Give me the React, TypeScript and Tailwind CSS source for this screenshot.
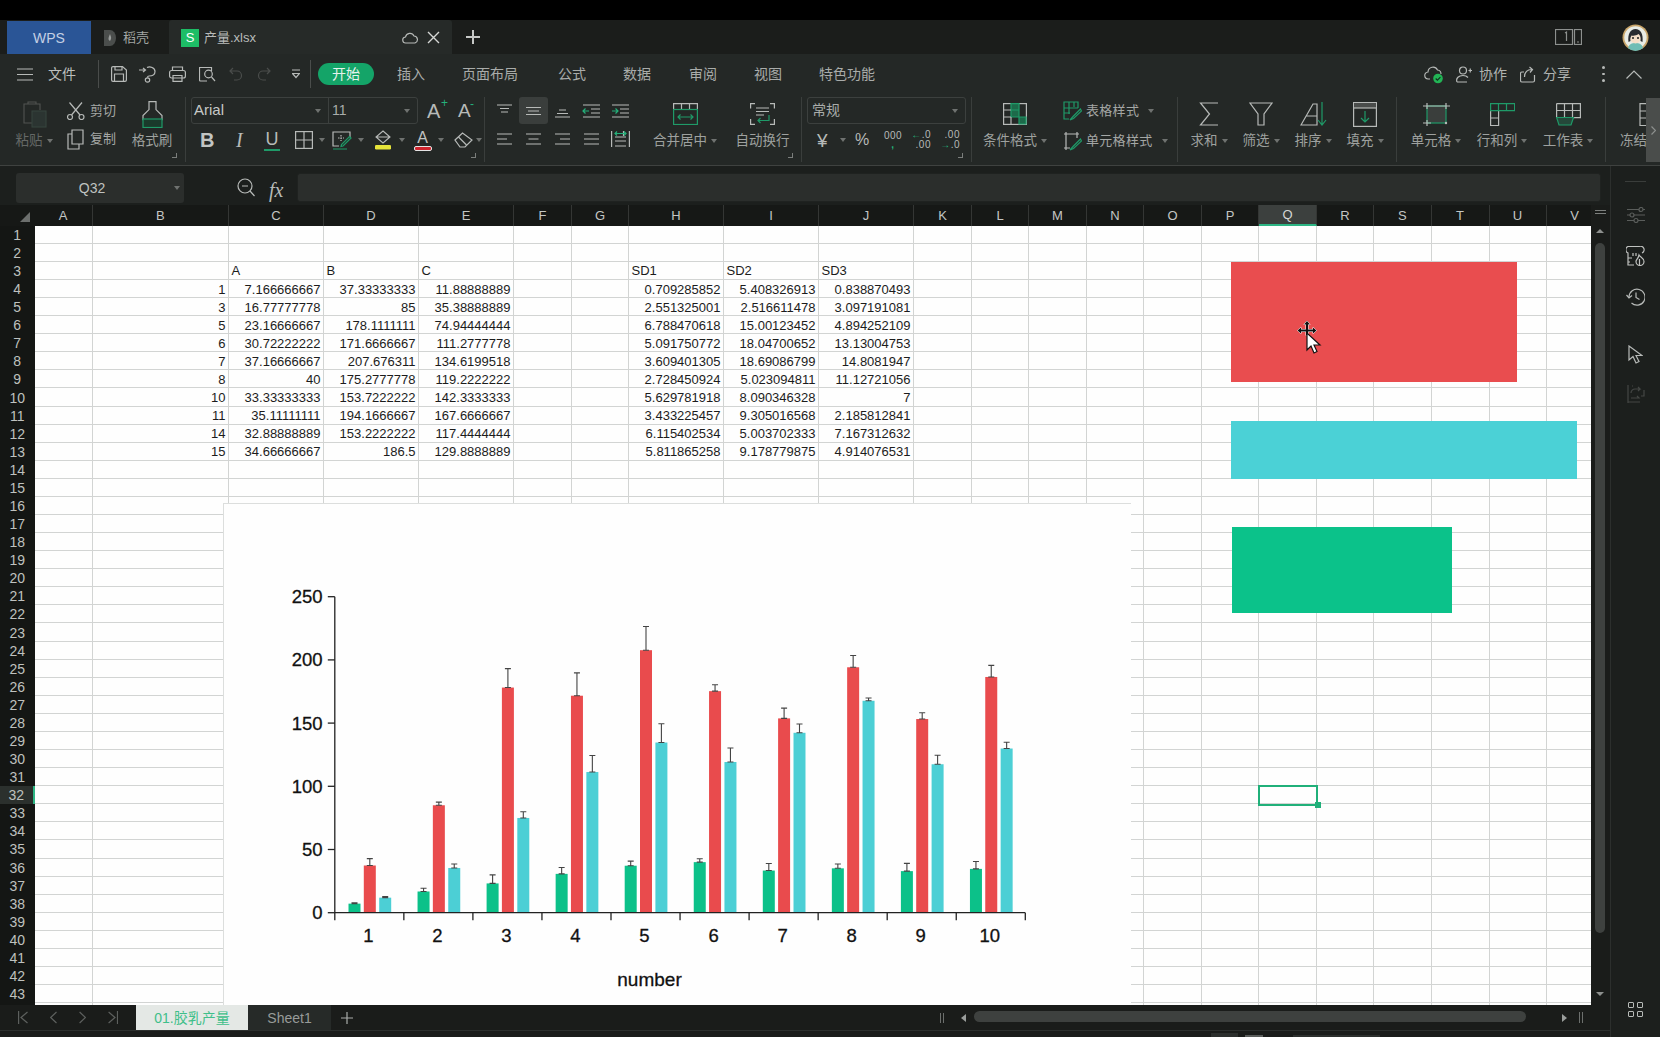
import type { ReactNode } from "react";

const LINE = "#b7bab8";

function Ic({ w, h, children, stroke = LINE }: { w: number; h: number; children: ReactNode; stroke?: string }) {
  return (
    <svg width={w} height={h} viewBox={`0 0 ${w} ${h}`} fill="none" stroke={stroke} strokeWidth="1.2" className="block shrink-0">
      {children}
    </svg>
  );
}

function Caret() {
  return <span className="block w-0 h-0 shrink-0 border-x-[3.5px] border-x-transparent border-t-[4px] border-t-[#6f7270]" />;
}

function Corner() {
  return <span className="absolute right-[8px] bottom-[4px] w-[5px] h-[5px] border-r border-b border-[#7b7e7c]" />;
}

function Big({ className, label, caret, dim, icon }: { className: string; label: string; caret?: boolean; dim?: boolean; icon: ReactNode }) {
  return (
    <div className={`flex flex-col items-center shrink-0 ${className}`}>
      <div className="h-[34px] flex items-center justify-center">{icon}</div>
      <div className={`h-[20px] flex items-center gap-[4px] text-[13.5px] whitespace-nowrap ${dim ? "text-[#656866]" : "text-[#9ea19f]"}`}>
        {label}
        {caret && <Caret />}
      </div>
    </div>
  );
}

function TitleBar() {
  return (
    <div className="h-[34px] shrink-0 flex bg-[#1b1d1b]">
      <div className="ml-[7px] mt-px pt-px w-[84px] flex items-center justify-center bg-[#2a5596] text-[14px] text-[#c3d0e4]">WPS</div>
      <div className="w-[78px] flex items-center pl-[11px] pt-px gap-[7px] text-[13px] text-[#a2a5a3]">
        <svg width="14" height="18" viewBox="0 0 14 18" className="block">
          <path d="M2 1h6a6 8 0 0 1 0 16H2z" fill="#4b4e4c" />
          <path d="M8 5c1 3 2 4 0 7-2-1-2-3 0-7z" fill="#9a9d9b" />
        </svg>
        稻壳
      </div>
      <div className="w-[283px] flex items-center bg-[#262a28] rounded-t-[3px] pt-px">
        <span className="ml-[12px] w-[18px] h-[18px] flex items-center justify-center bg-[#1dbd66] text-[13px] text-white">S</span>
        <span className="ml-[5px] text-[13px] text-[#b9bcba]">产量.xlsx</span>
        <span className="ml-auto">
          <Ic w={17} h={12}>
            <path d="M4 11a3 3 0 0 1-.5-6 4.5 4.5 0 0 1 8.5-1 3.6 3.6 0 0 1 1 7z" />
          </Ic>
        </span>
        <span className="ml-[8px] mr-[12px]">
          <Ic w={13} h={13} stroke="#d5d7d5">
            <path d="M1 1l11 11M12 1L1 12" strokeWidth="1.4" />
          </Ic>
        </span>
      </div>
      <div className="ml-[14px] self-center">
        <Ic w={14} h={14} stroke="#c6c8c6">
          <path d="M7 0v14M0 7h14" strokeWidth="2" />
        </Ic>
      </div>
      <div className="ml-auto self-center">
        <Ic w={27} h={16} stroke="#8d908e">
          <rect x="0.5" y="0.5" width="17" height="15" />
          <rect x="19.5" y="0.5" width="7" height="15" />
          <path d="M10 4l1.5-1v9M22 13h2" />
        </Ic>
      </div>
      <div className="ml-[40px] mr-[11px] self-center">
        <svg width="27" height="27" viewBox="0 0 27 27" className="block">
          <circle cx="13.5" cy="13.5" r="13" fill="#c9a66b" />
          <circle cx="13.5" cy="13.5" r="11.2" fill="#e8ece6" />
          <path d="M6 24c1-4 4-5 7.5-5s6.5 1 7.5 5a11 11 0 0 1-15 0z" fill="#6fbdb5" />
          <ellipse cx="13.5" cy="13.5" rx="5.5" ry="6" fill="#f5dfc8" />
          <path d="M6.5 18c-1-8 2-13 7-13s8 5 7 13l-2-1c.5-4-.5-6-2-7-2 1.5-5 2-7 1.5-1 1.5-1.5 3-1 5.5z" fill="#2a2c30" />
          <circle cx="11" cy="14" r="1" fill="#222" />
          <circle cx="16" cy="14" r="1" fill="#222" />
        </svg>
      </div>
    </div>
  );
}

function MenuBar() {
  const tabs = [
    ["插入", "ml-[23px]"],
    ["页面布局", "ml-[37px]"],
    ["公式", "ml-[40px]"],
    ["数据", "ml-[37px]"],
    ["审阅", "ml-[38px]"],
    ["视图", "ml-[37px]"],
    ["特色功能", "ml-[37px]"],
  ];
  return (
    <div className="h-[40px] shrink-0 flex items-center text-[14px] text-[#a9acaa]">
      <div className="ml-[17px]">
        <Ic w={16} h={13}>
          <path d="M0 1h16M0 6.5h16M0 12h16" />
        </Ic>
      </div>
      <span className="ml-[15px] text-[#bcbfbd]">文件</span>
      <span className="ml-[22px] w-px h-[28px] bg-[#4a4d4b]" />
      <div className="ml-[12px]">
        <Ic w={16} h={16}>
          <path d="M2 .6h9.5L15.4 4v10a1.4 1.4 0 0 1-1.4 1.4H2A1.4 1.4 0 0 1 .6 14V2A1.4 1.4 0 0 1 2 .6z" />
          <path d="M3.5 15V8h9v7M4 1v3h7V1" />
        </Ic>
      </div>
      <div className="ml-[12px]">
        <Ic w={17} h={17}>
          <path d="M0 4h6M4 2l2.5 2L4 6" />
          <path d="M8 1.5c3-1.5 8 0 8 4 0 3.500-3 4.500-6 4.500-1 0-1.500.5-1.500 1.500" />
          <circle cx="8.5" cy="14" r="2.2" />
        </Ic>
      </div>
      <div className="ml-[13px]">
        <Ic w={17} h={16}>
          <rect x="0.6" y="4.5" width="15.8" height="7.5" rx="2" />
          <path d="M3.5 4.5V1h10v3.5M4 9.5h9v5.9H4z" />
        </Ic>
      </div>
      <div className="ml-[13px]">
        <Ic w={17} h={16}>
          <path d="M8 15H1.5a1 1 0 0 1-1-1V1.5h12V5" />
          <circle cx="9.5" cy="8" r="3.8" />
          <path d="M12.5 11l3.5 4" />
        </Ic>
      </div>
      <div className="ml-[13px]">
        <Ic w={14} h={14} stroke="#4a4d4b">
          <path d="M4 1L1 4l3 3M1 4h7a4.5 4.5 0 0 1 0 9H5" />
        </Ic>
      </div>
      <div className="ml-[14px]">
        <Ic w={14} h={14} stroke="#4a4d4b">
          <path d="M10 1l3 3-3 3M13 4H6a4.5 4.5 0 0 0 0 9h3" />
        </Ic>
      </div>
      <div className="ml-[21px]">
        <Ic w={8} h={10}>
          <path d="M0 1h8M.5 4.5L4 8.5l3.5-4H.5z" />
        </Ic>
      </div>
      <span className="ml-[10px] w-px h-[28px] bg-[#4a4d4b]" />
      <span className="ml-[7px] w-[56px] h-[22px] rounded-full bg-[#14a468] flex items-center justify-center text-[#e6f2ec]">开始</span>
      {tabs.map(([t, m]) => (
        <span key={t} className={m}>
          {t}
        </span>
      ))}
      <div className="ml-auto">
        <svg width="20" height="19" viewBox="0 0 20 19" fill="none" stroke={LINE} strokeWidth="1.1" className="block">
          <path d="M6 14H4.5a3.5 3.5 0 0 1-.5-7 5 5 0 0 1 9.500-2 4 4 0 0 1 3.500 4" />
          <circle cx="14" cy="13.5" r="4.8" fill="#22b455" stroke="none" />
          <path d="M11.7 13.5l1.7 1.7 3-3" stroke="#10301f" />
        </svg>
      </div>
      <div className="ml-[12px]">
        <Ic w={16} h={17}>
          <circle cx="7" cy="4.5" r="3.5" />
          <path d="M1 16c-1.5-4 2-6.5 6-6.5 2.500 0 4 .8 5 2M1 16h10M12.5 4.5h3.5M14.25 2.5v4" />
        </Ic>
      </div>
      <span className="ml-[7px] text-[#b0b3b1]">协作</span>
      <div className="ml-[13px]">
        <Ic w={16} h={17}>
          <path d="M4 6H2a1.5 1.5 0 0 0-1.5 1.5v7A1.5 1.5 0 0 0 2 16h11a1.5 1.5 0 0 0 1.500-1.500V9" />
          <path d="M4.5 11c0-5 3-7.5 7-7.5M9.5 1l3 2.500-2.500 3" />
        </Ic>
      </div>
      <span className="ml-[7px] text-[#b0b3b1]">分享</span>
      <span className="ml-[31px] w-[3px] flex flex-col items-center gap-[4px]">
        <i className="block w-[2.5px] h-[2.5px] rounded-full bg-[#b7bab8]" />
        <i className="block w-[2.5px] h-[2.5px] rounded-full bg-[#b7bab8]" />
        <i className="block w-[2.5px] h-[2.5px] rounded-full bg-[#b7bab8]" />
      </span>
      <div className="ml-[21px] mr-[18px]">
        <Ic w={16} h={9}>
          <path d="M.5 8.5L8 1l7.5 7.5" />
        </Ic>
      </div>
    </div>
  );
}

function AlignIcon({ rows }: { rows: string }) {
  return (
    <Ic w={17} h={14}>
      <path d={rows} />
    </Ic>
  );
}

function FontGroup() {
  return (
    <div className="relative w-[299px] h-[65px] mt-[3px] shrink-0 border-r border-[#3a3e3c] pl-[5px]">
      <div className="flex items-center h-[27px]">
        <div className="flex w-[227px] h-[27px] border border-[#3c403e] rounded-[3px] text-[#c6c9c7]">
          <div className="w-[137px] flex items-center justify-between pl-[2px] pr-[7px] border-r border-[#3c403e] text-[15px]">
            Arial
            <Caret />
          </div>
          <div className="flex-1 flex items-center justify-between pl-[3px] pr-[7px] text-[14px] text-[#a9acaa]">
            11
            <Caret />
          </div>
        </div>
        <span className="ml-[9px] relative w-[21px] text-[20px] font-light leading-none text-[#b7bab8]">
          A<span className="absolute left-[14px] top-[-4px] text-[12px] text-[#25b07a]">+</span>
        </span>
        <span className="ml-[10px] relative w-[15px] text-[19px] font-light leading-none text-[#b7bab8]">
          A<span className="absolute left-[12px] top-[-3px] text-[12px] text-[#25b07a]">-</span>
        </span>
      </div>
      <div className="flex items-center h-[22px] mt-[5px]">
        <span className="ml-[9px] w-[14px] text-[20px] font-bold text-[#c2c5c3]">B</span>
        <span className="ml-[22px] w-[10px] text-[20px] italic [font-family:'Liberation_Serif',serif] text-[#b7bab8]">I</span>
        <span className="ml-[18px] w-[16px] h-[21px] flex justify-center text-[18px] leading-[19px] text-[#b7bab8] border-b-2 border-[#1f9a68]">U</span>
        <div className="ml-[15px]">
          <Ic w={18} h={18}>
            <rect x="0.6" y="0.6" width="16.8" height="16.8" />
            <path d="M9 1v16M1 9h16" />
          </Ic>
        </div>
        <span className="ml-[6px]">
          <Caret />
        </span>
        <div className="ml-[7px]">
          <Ic w={20} h={19}>
            <path d="M18 6V1H1v14h6" />
            <path d="M9 4v6M6 7h6" strokeDasharray="1.5 1" />
            <path d="M19 7L11 15l-2 .5.5-2 8-8zM1 18h14" stroke="#1f9a68" />
          </Ic>
        </div>
        <span className="ml-[6px]">
          <Caret />
        </span>
        <div className="ml-[10px]">
          <svg width="19" height="20" viewBox="0 0 19 20" fill="none" stroke={LINE} strokeWidth="1.1" className="block">
            <path d="M9 1l7 6-7 6-7-6zM2 7h14" />
            <rect x="1" y="15" width="16" height="4.5" rx="1.2" fill="#e6e43a" stroke="none" />
          </svg>
        </div>
        <span className="ml-[6px]">
          <Caret />
        </span>
        <div className="ml-[8px] flex flex-col items-center w-[19px]">
          <span className="text-[16px] leading-[15px] font-light text-[#c0c3c1]">A</span>
          <span className="w-[18px] h-[5px] mt-[1px] rounded-[2px] bg-[#d0242d] border border-[#e4e4e4]" />
        </div>
        <span className="ml-[6px]">
          <Caret />
        </span>
        <div className="ml-[10px]">
          <Ic w={19} h={16}>
            <path d="M1 8l7.5-7L18 8l-7 7H6z" />
            <path d="M4.5 5l8 8" />
          </Ic>
        </div>
        <span className="ml-[3px]">
          <Caret />
        </span>
      </div>
      <Corner />
    </div>
  );
}

function AlignGroup() {
  const top = ["M1 1h15M4 4.5h9M5 8h7", "M1 3.5h15M3 7h11M1 10.5h15", "M5 6h7M3 9.5h11M1 13h15"];
  const row2 = ["M1 2h15M1 7h10M1 12h15", "M1 2h15M3.5 7h10M1 12h15", "M1 2h15M6 7h10M1 12h15", "M1 2h15M1 7h15M1 12h15"];
  return (
    <div className="relative w-[317px] h-[65px] mt-[3px] shrink-0 flex border-r border-[#3a3e3c] pl-[5px]">
      <div className="grid grid-cols-[repeat(5,29px)] grid-rows-[27px_26px] gap-y-[2px] h-[55px]">
        {top.map((d, i) => (
          <div key={d} className={`flex items-center justify-center rounded-[3px] ${i === 1 ? "bg-[#3a3e3c]" : ""}`}>
            <AlignIcon rows={d} />
          </div>
        ))}
        <div className="flex items-center justify-center">
          <Ic w={19} h={14}>
            <path d="M1 1h17M9 5h9M9 9h9M1 13h17" />
            <path d="M7 7H1M3.5 4.5L1 7l2.5 2.500" stroke="#25b07a" />
          </Ic>
        </div>
        <div className="flex items-center justify-center">
          <Ic w={19} h={14}>
            <path d="M1 1h17M9 5h9M9 9h9M1 13h17" />
            <path d="M1 7h6M4.5 4.5L7 7 4.5 9.5" stroke="#25b07a" />
          </Ic>
        </div>
        {row2.map((d) => (
          <div key={d} className="flex items-center justify-center">
            <AlignIcon rows={d} />
          </div>
        ))}
        <div className="flex items-center justify-center">
          <Ic w={19} h={18}>
            <path d="M.6 1v16M18.4 1v16M4 7h11M4 11h11M4 16h11M12.5 1V6" />
            <path d="M4 3.5h11M6 1.5L4 3.5l2 2M13 1.5l2 2-2 2" stroke="#25b07a" />
          </Ic>
        </div>
      </div>
      <Big
        className="ml-[10px] w-[80px]"
        label="合并居中"
        caret
        icon={
          <Ic w={25} h={22}>
            <path d="M.6 6.5V.6h23.8v5.9M8.5 1v5.5M16.5 1v5.5" />
            <rect x="0.6" y="6.5" width="23.8" height="15" stroke="#1f9a68" />
            <path d="M5 14h15M7.5 11.5L5 14l2.5 2.5M17.500 11.5L20 14l-2.500 2.500" stroke="#1f9a68" />
          </Ic>
        }
      />
      <Big
        className="w-[75px]"
        label="自动换行"
        icon={
          <Ic w={25} h={22}>
            <path d="M5 .6H.6v5M20 .6h4.4v5M.6 16v5.4H5M24.4 16v5.4H20M6 5h13M6 8.5h13M6 12h8" />
            <path d="M19 12v5.500H8M10.500 15L8 17.500l2.500 2.500" stroke="#1f9a68" />
          </Ic>
        }
      />
      <Corner />
    </div>
  );
}

function NumberGroup() {
  return (
    <div className="relative w-[170px] h-[65px] mt-[3px] shrink-0 border-r border-[#3a3e3c] pl-[5px]">
      <div className="w-[159px] h-[27px] border border-[#3c403e] rounded-[3px] flex items-center justify-between pl-[4px] pr-[7px] text-[14px] text-[#a9acaa]">
        常规
        <Caret />
      </div>
      <div className="flex items-center h-[28px] mt-[2px] text-[#b7bab8]">
        <span className="ml-[10px] w-[16px] text-[19px] leading-none">¥</span>
        <span className="ml-[7px]">
          <Caret />
        </span>
        <span className="ml-[9px] w-[16px] text-[16px] leading-none">%</span>
        <span className="ml-[12px] w-[20px] flex flex-col items-center text-[10px] leading-[9px] tracking-[0.5px]">
          000
          <span className="text-[#25b07a] font-bold">,</span>
        </span>
        <span className="ml-[8px] w-[20px] flex flex-col items-end text-[10px] leading-[10px] tracking-[0.5px]">
          <span>
            <span className="text-[#25b07a]">←</span>.0
          </span>
          .00
        </span>
        <span className="ml-[9px] w-[20px] flex flex-col items-end text-[10px] leading-[10px] tracking-[0.5px]">
          .00
          <span>
            <span className="text-[#25b07a]">→</span>.0
          </span>
        </span>
      </div>
      <Corner />
    </div>
  );
}

function StylesGroup() {
  return (
    <div className="w-[206px] h-[65px] mt-[3px] shrink-0 flex border-r border-[#3a3e3c] pl-[3px]">
      <Big
        className="w-[80px]"
        label="条件格式"
        caret
        icon={
          <svg width="24" height="22" viewBox="0 0 24 22" fill="none" stroke={LINE} strokeWidth="1.2" className="block">
            <rect x="0.6" y="0.6" width="22.8" height="20.8" />
            <path d="M8 7h8v7h7v7h-7V14H8zM8 .6h8V7H8z" fill="#1d6a4a" stroke="#1f9a68" />
            <path d="M1 7h7M1 14h7M8 14v7" />
          </svg>
        }
      />
      <div className="ml-[8px] flex flex-col">
        <div className="h-[27px] flex items-center text-[13px] tracking-[0.3px] text-[#a4a7a5]">
          <span className="w-[23px]">
            <Ic w={19} h={20} stroke="#1f9a68">
              <path d="M6 18H1V1h14v6M1 7h14M1 12h6M6 1v12M11 1v5" />
              <path d="M17.5 8L10 15.5 7 19l3.5-1.5L18.5 10z" />
            </Ic>
          </span>
          表格样式
          <span className="ml-[9px]">
            <Caret />
          </span>
        </div>
        <div className="h-[27px] mt-[3px] flex items-center text-[13px] tracking-[0.3px] text-[#a4a7a5]">
          <span className="w-[23px]">
            <Ic w={19} h={20}>
              <path d="M1 3h15M3 1v18M1 17h6M14 1v6" />
              <path d="M17.5 8L10 15.5 7 19l3.5-1.5L18.5 10z" stroke="#1f9a68" />
            </Ic>
          </span>
          单元格样式
          <span className="ml-[9px]">
            <Caret />
          </span>
        </div>
      </div>
    </div>
  );
}

function ToolsGroup() {
  return (
    <div className="w-[219px] h-[65px] mt-[3px] shrink-0 flex border-r border-[#3a3e3c] pl-[5px]">
      <Big
        className="w-[52px]"
        label="求和"
        caret
        icon={
          <Ic w={20} h={24}>
            <path d="M19 1H1.5l9 11-9 11H19" />
          </Ic>
        }
      />
      <Big
        className="w-[52px]"
        label="筛选"
        caret
        icon={
          <Ic w={24} h={24}>
            <path d="M1 1h22l-8 11v11H9V12z" />
          </Ic>
        }
      />
      <Big
        className="w-[52px]"
        label="排序"
        caret
        icon={
          <Ic w={27} h={25}>
            <path d="M1 23L13 2h4v21zM6 14h11M1 23h16" />
            <path d="M22 0v23M18 18l4 5 4-5" stroke="#1f9a68" />
          </Ic>
        }
      />
      <Big
        className="w-[52px]"
        label="填充"
        caret
        icon={
          <Ic w={24} h={25}>
            <rect x="0.6" y="0.6" width="22.8" height="23.8" />
            <rect x="1" y="1" width="22" height="5" fill="#4a4d4b" stroke="none" />
            <path d="M1 6h22" />
            <path d="M12 9v11M8 16l4 4 4-4" stroke="#1f9a68" />
          </Ic>
        }
      />
    </div>
  );
}

function SheetToolsGroup() {
  return (
    <div className="w-[209px] h-[65px] mt-[3px] shrink-0 flex border-r border-[#3a3e3c] pl-[6px]">
      <Big
        className="w-[66px]"
        label="单元格"
        caret
        icon={
          <svg width="27" height="23" viewBox="0 0 27 23" fill="none" className="block" stroke={LINE} strokeWidth="1.2">
            <rect x="4" y="3" width="19" height="17" fill="#3a3e3c" stroke="#1f9a68" />
            <path d="M0 3h27M4 0v6M0 20h8M4 17v6M23 0v6" />
            <circle cx="23" cy="20" r="1.2" fill={LINE} stroke="none" />
          </svg>
        }
      />
      <Big
        className="w-[66px]"
        label="行和列"
        caret
        icon={
          <Ic w={25} h={23}>
            <path d="M.6 7.5h8v15h-8zM.6 15h8" />
            <path d="M.6.6h24v7H.6zM8.5 1v6.5M16.5 1v6.5" stroke="#1f9a68" />
          </Ic>
        }
      />
      <Big
        className="w-[66px]"
        label="工作表"
        caret
        icon={
          <Ic w={25} h={23}>
            <path d="M.6.6h23.8v14H17M.6.6v14M.6 7.5h23.8M8.5 1v14M16.5 1v14" />
            <path d="M.6 14.5h16.9L15 22H3z" stroke="#1f9a68" fill="#25483a" />
          </Ic>
        }
      />
    </div>
  );
}

function Ribbon() {
  return (
    <div className="relative h-[72px] shrink-0 flex border-b border-[#3f4240]">
      <div className="relative w-[186px] h-[65px] mt-[3px] shrink-0 flex border-r border-[#3a3e3c] pl-[12px]">
        <Big
          className="w-[44px]"
          label="粘贴"
          caret
          dim
          icon={
            <span className="ml-[2px]">
              <svg width="24" height="27" viewBox="0 0 24 27" fill="none" stroke="#505351" strokeWidth="1.1" className="block">
                <path d="M11 22H1V3h16v6M5 3V1h8v2" />
                <rect x="9" y="10" width="14" height="16" fill="#2b3431" stroke="#36443d" />
              </svg>
            </span>
          }
        />
        <div className="ml-[11px] w-[65px] flex flex-col text-[13px] text-[#a4a7a5]">
          <div className="h-[28px] flex items-center gap-[5px]">
            <Ic w={18} h={18}>
              <circle cx="3" cy="15" r="2.5" />
              <circle cx="14.5" cy="15" r="2.5" />
              <path d="M4.5 13L15 .5M13 13L2.5.5" />
            </Ic>
            剪切
          </div>
          <div className="h-[26px] mt-[1px] flex items-center gap-[6px]">
            <Ic w={17} h={21}>
              <path d="M5 15V1h11v14zM5 5H1v15h11v-5" />
            </Ic>
            复制
          </div>
        </div>
        <Big
          className="w-[40px]"
          label="格式刷"
          icon={
            <Ic w={21} h={27}>
              <path d="M7 .6h7v8l6 6v4H1v-4l6-6z" />
              <rect x="1" y="18" width="19" height="8.5" stroke="#1f9a68" fill="#1a3a2b" />
            </Ic>
          }
        />
        <Corner />
      </div>
      <FontGroup />
      <AlignGroup />
      <NumberGroup />
      <StylesGroup />
      <ToolsGroup />
      <SheetToolsGroup />
      <div className="w-[54px] h-[65px] mt-[3px] pl-[14px]">
        <Big
          className="w-[27px]"
          label="冻结"
          icon={
            <span className="block w-[27px] pl-[19px] overflow-hidden">
              <Ic w={24} h={23}>
                <path d="M1 .6h22v22H1zM1 8h22M1 15h22M8 1v22" />
              </Ic>
            </span>
          }
        />
      </div>
      <div className="absolute right-0 top-[4px] w-[14px] h-[64px] bg-[#4a4d4b] flex items-center justify-center">
        <Ic w={5} h={9} stroke="#8d908e">
          <path d="M.5.5l4 4-4 4" />
        </Ic>
      </div>
    </div>
  );
}

function FormulaBar() {
  return (
    <div className="h-[39px] shrink-0 flex pt-[7px] pl-[16px]">
      <div className="relative w-[168px] h-[30px] rounded-[3px] bg-[#2b2e2c] flex items-center justify-center pr-[16px] text-[14px] text-[#bfc2c0]">
        Q32
        <span className="absolute right-[4px] top-[13px]">
          <Caret />
        </span>
      </div>
      <div className="ml-[53px] mt-[5px]">
        <Ic w={18} h={19}>
          <circle cx="8" cy="8" r="7" />
          <path d="M5 8h6M13 13l4.5 5" />
        </Ic>
      </div>
      <span className="ml-[14px] mt-[2px] text-[20px] italic [font-family:'Liberation_Serif',serif] text-[#b7bab8]">fx</span>
      <div className="ml-[14px] w-[1304px] h-[29px] rounded-[3px] bg-[#2b2e2c] border border-[#1f2220]" />
    </div>
  );
}

const COLS = ["A", "B", "C", "D", "E", "F", "G", "H", "I", "J", "K", "L", "M", "N", "O", "P", "Q", "R", "S", "T", "U", "V"];

const N = ["1", "3", "5", "6", "7", "8", "10", "11", "14", "15"];
const A = ["7.166666667", "16.77777778", "23.16666667", "30.72222222", "37.16666667", "40", "33.33333333", "35.11111111", "32.88888889", "34.66666667"];
const B = ["37.33333333", "85", "178.1111111", "171.6666667", "207.676311", "175.2777778", "153.7222222", "194.1666667", "153.2222222", "186.5"];
const C = ["11.88888889", "35.38888889", "74.94444444", "111.2777778", "134.6199518", "119.2222222", "142.3333333", "167.6666667", "117.4444444", "129.8888889"];
const S1 = ["0.709285852", "2.551325001", "6.788470618", "5.091750772", "3.609401305", "2.728450924", "5.629781918", "3.433225457", "6.115402534", "5.811865258"];
const S2 = ["5.408326913", "2.516611478", "15.00123452", "18.04700652", "18.69086799", "5.023094811", "8.090346328", "9.305016568", "5.003702333", "9.178779875"];
const S3 = ["0.838870493", "3.097191081", "4.894252109", "13.13004753", "14.8081947", "11.12721056", "7", "2.185812841", "7.167312632", "4.914076531"];

const DATA: Record<string, string[]> = { B: N, C: A, D: B, E: C, H: S1, I: S2, J: S3 };
const HEADS: Record<string, string> = { C: "A", D: "B", E: "C", H: "SD1", I: "SD2", J: "SD3" };

function cellText(col: string, row: number) {
  if (row === 3) return HEADS[col] ?? "";
  if (row >= 4 && row <= 13) return DATA[col]?.[row - 4] ?? "";
  return "";
}

function Chart() {
  const x0 = 334.3;
  const step = 69.05;
  const y0 = 912.7;
  const k = 1.264;
  const series = [
    { fill: "#0cc189", off: 13.7, v: A, s: S1 },
    { fill: "#e94b4d", off: 29, v: B, s: S2 },
    { fill: "#4ccfd5", off: 44.4, v: C, s: S3 },
  ];
  return (
    <svg width="907" height="502" viewBox="223.5 504 907 502" className="block">
      {series.map((d) =>
        d.v.map((val, i) => {
          const v = Number(val);
          const x = x0 + i * step + d.off;
          const top = y0 - v * k;
          const end = y0 - (v + Number(d.s[i])) * k;
          return (
            <g key={d.fill + i}>
              <rect x={x} y={top} width="12" height={v * k} fill={d.fill} />
              <path d={`M${x + 6} ${top}V${end}M${x + 3} ${end}h6M${x + 3} ${top}h6`} stroke="#444" strokeWidth="1.1" fill="none" />
            </g>
          );
        })
      )}
      <path d={`M${x0} 596.7V${y0}H${x0 + step * 10}`} stroke="#222" strokeWidth="1.3" fill="none" />
      {[0, 50, 100, 150, 200, 250].map((t) => (
        <g key={t}>
          <path d={`M${x0 - 7} ${y0 - t * k}H${x0}`} stroke="#222" strokeWidth="1.3" />
          <text x={322} y={y0 - t * k + 6.5} textAnchor="end" fontSize="18.5" fill="#111" stroke="#111" strokeWidth="0.3" fontFamily="'Liberation Sans', sans-serif">
            {t}
          </text>
        </g>
      ))}
      {Array.from({ length: 11 }, (_, i) => (
        <path key={i} d={`M${x0 + i * step} ${y0}v7.5`} stroke="#222" strokeWidth="1.3" />
      ))}
      {Array.from({ length: 10 }, (_, i) => (
        <text key={i} x={x0 + i * step + 33.5} y={941.5} textAnchor="middle" fontSize="18.5" fill="#111" stroke="#111" strokeWidth="0.3" fontFamily="'Liberation Sans', sans-serif">
          {i + 1}
        </text>
      ))}
      <text x={649} y={986} textAnchor="middle" fontSize="19" fill="#111" stroke="#111" strokeWidth="0.3" fontFamily="'Liberation Sans', sans-serif">
        number
      </text>
    </svg>
  );
}

function Sheet() {
  return (
    <div className="relative w-[1590.5px] h-[800px] shrink-0 overflow-hidden bg-[#fefefe]">
      <div className="grid grid-cols-[34.5px_58px_136.5px_95px_95px_95px_58px_57px_95px_95px_95px_58px_57px_58px_57px_58px_57px_58px_57px_57.5px_58px_57px_57px] grid-rows-[21px_17.5px_18px_18.5px_repeat(40,18.08px)_18px]">
        <div className="bg-[#161816] flex items-end justify-end pr-[5px] pb-[4px]">
          <span className="w-0 h-0 border-l-[10px] border-l-transparent border-b-[10px] border-b-[#6c6f6d]" />
        </div>
        {COLS.map((c) => (
          <div
            key={c}
            className={`flex items-center justify-center text-[13px] border-r border-[#343634] ${
              c === "Q" ? "bg-[#3c403e] text-[#d5d7d5] border-b-2 border-b-[#2db584]" : "bg-[#161816] text-[#c4c6c4]"
            }`}
          >
            {c}
          </div>
        ))}
        {Array.from({ length: 44 }, (_, i) => i + 1).map((row) => [
          <div
            key={`h${row}`}
            className={`flex items-center justify-center pt-px text-[14px] text-[#bfc1bf] ${row === 32 ? "bg-[#2b302d] border-r-2 border-[#2db584]" : "bg-[#141614]"}`}
          >
            {row <= 43 ? row : ""}
          </div>,
          ...COLS.map((c) => (
            <div
              key={c + row}
              className={`flex items-center pt-px px-[2.5px] text-[13px] leading-none text-[#1c1c1c] border-r border-b border-[#d2d4d3] ${
                row === 3 ? "justify-start" : "justify-end"
              }`}
            >
              {cellText(c, row)}
            </div>
          )),
        ])}
      </div>

      {/* chart and loose shapes float over the cells */}
      <div className="absolute left-[222.5px] top-[298px] w-[908px] h-[502px] bg-[#fefefe] border-l border-t border-[#dcdedd]">
        <Chart />
      </div>
      <div className="absolute left-[1231px] top-[57px] w-[286px] h-[120px] bg-[#e94d4f]" />
      <div className="absolute left-[1231px] top-[216px] w-[346px] h-[58px] bg-[#4bd1d6]" />
      <div className="absolute left-[1232px] top-[322px] w-[220px] h-[86px] bg-[#0bc28a]" />
      <div className="absolute left-[1257.5px] top-[579.5px] w-[60px] h-[21px] border-2 border-[#20b07a]" />
      <div className="absolute left-[1314.5px] top-[596.5px] w-[6px] h-[6px] bg-[#20b07a]" />
      <div className="absolute left-[1296px] top-[115px]">
        <svg width="26" height="38" viewBox="0 0 26 38" className="block">
          <path
            d="M11 1l3 3.5h-2v5h5V7.5l3.5 3-3.5 3v-2h-5v4h-2v-4H5v2l-3.500-3 3.500-3v2h5v-5H8z"
            fill="#111"
            stroke="#fff"
            strokeWidth="1"
            paintOrder="stroke"
          />
          <path d="M11 13v17l4-4 3 7 3-1.5-3-6.5h6z" fill="#fff" stroke="#111" strokeWidth="1.2" />
        </svg>
      </div>
    </div>
  );
}

function TabStrip() {
  return (
    <div className="h-[25px] shrink-0 flex bg-[#1a1c1a] text-[14px]">
      <div className="w-[136px] flex items-center pl-[18px] gap-[22px]">
        <Ic w={10} h={13} stroke="#5d605e">
          <path d="M.6 0v13M9.5 1L3 6.5 9.5 12" />
        </Ic>
        <Ic w={7} h={13} stroke="#5d605e">
          <path d="M6.5 1L.6 6.5 6.5 12" />
        </Ic>
        <Ic w={7} h={13} stroke="#5d605e">
          <path d="M.6 1l5.9 5.5L.6 12" />
        </Ic>
        <Ic w={10} h={13} stroke="#5d605e">
          <path d="M9.5 0v13M.6 1L7 6.5.6 12" />
        </Ic>
      </div>
      <div className="w-[112px] pt-[2px] flex items-center justify-center bg-[#e4e8e5] text-[#3fbf8a]">01.胶乳产量</div>
      <div className="w-[83px] pt-[2px] flex items-center justify-center bg-[#262a28] text-[#989b99]">Sheet1</div>
      <div className="ml-[10px] self-center">
        <Ic w={12} h={12} stroke="#a9acaa">
          <path d="M6 0v12M0 6h12" />
        </Ic>
      </div>
      <div className="ml-[587px] flex items-center gap-[2px] self-center">
        <span className="w-px h-[10px] bg-[#6c6f6d]" />
        <span className="w-px h-[10px] bg-[#6c6f6d]" />
      </div>
      <span className="ml-[17px] self-center w-0 h-0 border-y-[4px] border-y-transparent border-r-[5px] border-r-[#9a9d9b]" />
      <div className="ml-[8px] mt-[6px] w-[552px] h-[11px] rounded-full bg-[#3e413f]" />
      <span className="ml-[36px] self-center w-0 h-0 border-y-[4px] border-y-transparent border-l-[5px] border-l-[#9a9d9b]" />
      <div className="ml-[12px] flex items-center gap-[2px] self-center">
        <span className="w-px h-[11px] bg-[#6c6f6d]" />
        <span className="w-px h-[11px] bg-[#6c6f6d]" />
      </div>
    </div>
  );
}

function VScroll() {
  return (
    <div className="w-[19.5px] h-[800px] shrink-0 flex flex-col items-center bg-[#1a1c1a]">
      <span className="mt-[5px] w-[11px] h-[4px] border-y border-[#7d807e]" />
      <span className="mt-[15px] w-0 h-0 border-x-[4px] border-x-transparent border-b-[4px] border-b-[#8d908e]" />
      <span className="mt-[10px] w-[10px] h-[690px] rounded-full bg-[#3e413f]" />
      <span className="mt-[59px] w-0 h-0 border-x-[4px] border-x-transparent border-t-[4px] border-t-[#8d908e]" />
    </div>
  );
}

function SideBar() {
  return (
    <div className="w-[50px] flex flex-col items-center bg-[#1c1f1d] border-l border-[#2c2f2d]">
      <span className="mt-[15px] w-[21px] h-px bg-[#3a3d3b]" />
      <div className="mt-[25px]">
        <Ic w={18} h={16} stroke="#5a5d5b">
          <path d="M0 2.5h12M16 2.5h2M0 8h3M7 8h11M0 13.5h7M11 13.5h7" />
          <circle cx="14" cy="2.5" r="2" />
          <circle cx="5" cy="8" r="2" />
          <circle cx="9" cy="13.5" r="2" />
        </Ic>
      </div>
      <div className="mt-[23px]">
        <Ic w={19} h={20} stroke="#c0c2c0">
          <path d="M4 16H2V7a3.5 3.5 0 0 1 0-6.500h11A3.500 3.500 0 0 1 16 7M2 12h4M2 16v3h6" />
          <path d="M7 7v3M10 7v3" />
          <path d="M13 9c1 2 5 3 5 6.5a4 4 0 0 1-8 0c0-2 2-2 3-6.5z" />
          <path d="M13.5 13v6" />
        </Ic>
      </div>
      <div className="mt-[22px]">
        <Ic w={19} h={18} stroke="#b7bab8">
          <path d="M3 9a8 8 0 1 1 2.5 6" />
          <path d="M.5 7L3 10l3-2.5M10 4.5V9.5l3.5 2" />
        </Ic>
      </div>
      <div className="mt-[39px]">
        <Ic w={15} h={19}>
          <path d="M1 1v14l4-3.5 3 6.5 3-1.5-3-6h6z" />
        </Ic>
      </div>
      <div className="mt-[21px]">
        <Ic w={18} h={18} stroke="#444745">
          <path d="M1 0v18M5 1h1M1 17h12M4 13h8l-2-2M17 5v6h-3M4 8a4 4 0 0 1 4-4h5l-2-2M13 4l-2 2" />
        </Ic>
      </div>
      <div className="mt-auto mb-[20px] grid grid-cols-2 gap-[3px]">
        <span className="w-[6px] h-[6px] border border-[#b7bab8] rounded-[1px]" />
        <span className="w-[6px] h-[6px] border border-[#b7bab8] rounded-[1px]" />
        <span className="w-[6px] h-[6px] border border-[#b7bab8] rounded-[1px]" />
        <span className="w-[6px] h-[6px] border border-[#b7bab8] rounded-[1px]" />
      </div>
    </div>
  );
}

export default function App() {
  return (
    <div className="w-[1660px] h-[1037px] overflow-hidden bg-black flex flex-col [font-family:'Liberation_Sans','Noto_Sans_CJK_SC',sans-serif]">
      <div className="h-[20px] shrink-0" />
      <TitleBar />
      <div className="shrink-0 bg-[#242826]">
        <MenuBar />
        <Ribbon />
      </div>
      <div className="flex-1 min-h-0 flex bg-[#1c1f1d]">
        <div className="w-[1610px] shrink-0 flex flex-col">
          <FormulaBar />
          <div className="flex">
            <Sheet />
            <VScroll />
          </div>
          <TabStrip />
          <div className="flex-1 bg-[#1a1c1a] border-t border-[#2c2f2d] flex items-end">
            <span className="ml-[1211px] w-[27px] h-[4px] bg-[#2c2f2d]" />
            <span className="ml-[7px] w-[18px] h-[2px] bg-[#5a5d5b]" />
            <span className="ml-[30px] w-[87px] h-[2px] bg-[#2c2f2d]" />
          </div>
        </div>
        <SideBar />
      </div>
    </div>
  );
}
